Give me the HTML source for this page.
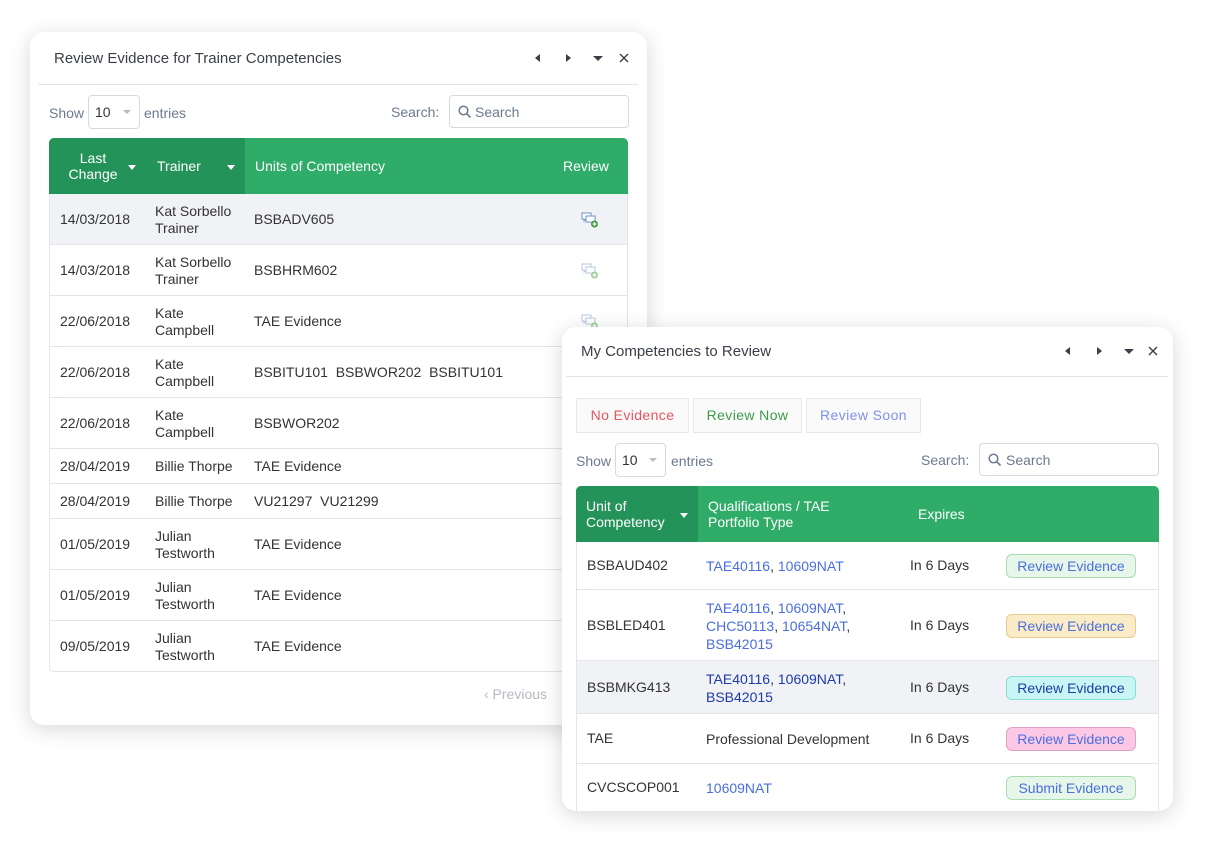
<!DOCTYPE html>
<html><head><meta charset="utf-8"><style>
*{box-sizing:border-box;margin:0;padding:0}
body{width:1216px;height:852px;background:#fff;font-family:"Liberation Sans",sans-serif;font-size:14px;color:#333;position:relative;overflow:hidden}
.p{position:absolute;background:#fff;border-radius:14px;box-shadow:0 4px 22px rgba(0,0,0,.16);overflow:hidden}
.a{position:absolute;white-space:nowrap}
.ttl{font-size:15px;color:#3a3f48}
.hr{position:absolute;height:1px;background:#e2e4e8}
.g{color:#6c7a8e}
.sel{position:absolute;border:1px solid #d6d9de;border-radius:4px;background:#fff}
.tri{display:inline-block;width:0;height:0;border-left:4px solid transparent;border-right:4px solid transparent;border-top:5px solid #fff}
.th{position:absolute;background:#2eac68;color:#fff}
.thd{position:absolute;background:#24935a}
.row{position:absolute;border-bottom:1px solid #e3e5e9;border-left:1px solid #e3e5e9;border-right:1px solid #e3e5e9}
.lk{color:#4a6ee0}
.btn{position:absolute;border-radius:6px;font-size:14px;text-align:center;line-height:22px;height:24px;width:130px;color:#4a6ee0}
.fb{position:absolute;height:35px;border:1px solid #e8e8e8;background:#fafafa;font-size:14px;line-height:33px;text-align:center;letter-spacing:.4px}
.tl{position:absolute;width:0;height:0;border-top:4px solid transparent;border-bottom:4px solid transparent;border-right:5px solid #3a3f48}
.tr{position:absolute;width:0;height:0;border-top:4px solid transparent;border-bottom:4px solid transparent;border-left:5px solid #3a3f48}
.td{position:absolute;width:0;height:0;border-left:5px solid transparent;border-right:5px solid transparent;border-top:5px solid #3a3f48}
</style></head><body>
<svg width="0" height="0" style="position:absolute"><defs><symbol id="mg" viewBox="0 0 14 14"><circle cx="5.5" cy="5.5" r="4.3" fill="none" stroke="#6c7a8e" stroke-width="1.5"/><path d="M8.7 8.7L12.5 12.5" stroke="#6c7a8e" stroke-width="1.6"/></symbol><symbol id="x" viewBox="0 0 10 10"><path d="M1 1L9 9M9 1L1 9" stroke="#3a3f48" stroke-width="1.4"/></symbol></defs></svg>

<!-- Panel 1 -->
<div class="p" style="left:30px;top:32px;width:617px;height:693px">
  <div class="a ttl" style="left:24px;top:18px">Review Evidence for Trainer Competencies</div>
  <div class="tl" style="left:505px;top:22px"></div>
  <div class="tr" style="left:536px;top:22px"></div>
  <div class="td" style="left:563px;top:24px"></div>
  <svg class="a" style="left:589px;top:21px" width="10" height="10"><use href="#x"/></svg>
  <div class="hr" style="left:8px;top:52px;width:600px"></div>
  <div class="a g" style="left:19px;top:73px">Show</div>
  <div class="sel" style="left:58px;top:63px;width:52px;height:34px"><span class="a" style="left:6px;top:8px">10</span><span class="a" style="left:34px;top:14px;border-left:4px solid transparent;border-right:4px solid transparent;border-top:4px solid #bbb"></span></div>
  <div class="a g" style="left:114px;top:73px">entries</div>
  <div class="a g" style="left:361px;top:72px">Search:</div>
  <div class="sel" style="left:419px;top:63px;width:180px;height:33px"><svg class="a" style="left:8px;top:9px" width="14" height="14"><use href="#mg"/></svg><span class="a g" style="left:25px;top:8px">Search</span></div>
  <div class="th" style="left:19px;top:106px;width:579px;height:56px;border-radius:5px 5px 0 0"></div>
  <div class="thd" style="left:19px;top:106px;width:196px;height:56px;border-radius:5px 0 0 0"></div>
  <div class="a" style="left:38px;top:118px;width:50px;color:#fff;text-align:center;line-height:16px">Last<br>Change</div>
  <div class="a" style="left:98px;top:125px"><span class="tri"></span></div>
  <div class="a" style="left:127px;top:126px;color:#fff">Trainer</div>
  <div class="a" style="left:197px;top:125px"><span class="tri"></span></div>
  <div class="a" style="left:225px;top:126px;color:#fff">Units of Competency</div>
  <div class="a" style="left:533px;top:126px;color:#fff">Review</div>
  <div id="r1"></div>
</div>

<!-- Panel 2 -->
<div class="p" style="left:562px;top:327px;width:611px;height:484px">
  <div class="a ttl" style="left:19px;top:16px">My Competencies to Review</div>
  <div class="tl" style="left:503px;top:20px"></div>
  <div class="tr" style="left:535px;top:20px"></div>
  <div class="td" style="left:562px;top:22px"></div>
  <svg class="a" style="left:586px;top:19px" width="10" height="10"><use href="#x"/></svg>
  <div class="hr" style="left:4px;top:49px;width:602px"></div>
  <div class="fb" style="left:14px;top:71px;width:113px;color:#e9545e">No Evidence</div>
  <div class="fb" style="left:131px;top:71px;width:109px;color:#3e9a4a">Review Now</div>
  <div class="fb" style="left:244px;top:71px;width:115px;color:#7f92ea">Review Soon</div>
  <div class="a g" style="left:14px;top:126px">Show</div>
  <div class="sel" style="left:53px;top:116px;width:51px;height:34px"><span class="a" style="left:6px;top:8px">10</span><span class="a" style="left:33px;top:14px;border-left:4px solid transparent;border-right:4px solid transparent;border-top:4px solid #bbb"></span></div>
  <div class="a g" style="left:109px;top:126px">entries</div>
  <div class="a g" style="left:359px;top:125px">Search:</div>
  <div class="sel" style="left:417px;top:116px;width:180px;height:33px"><svg class="a" style="left:8px;top:9px" width="14" height="14"><use href="#mg"/></svg><span class="a g" style="left:26px;top:8px">Search</span></div>
  <div class="th" style="left:14px;top:159px;width:583px;height:56px;border-radius:5px 5px 0 0"></div>
  <div class="thd" style="left:14px;top:159px;width:122px;height:56px;border-radius:5px 0 0 0"></div>
  <div class="a" style="left:24px;top:171px;color:#fff;line-height:16px">Unit of<br>Competency</div>
  <div class="a" style="left:118px;top:178px"><span class="tri"></span></div>
  <div class="a" style="left:146px;top:171px;color:#fff;line-height:16px">Qualifications / TAE<br>Portfolio Type</div>
  <div class="a" style="left:356px;top:179px;color:#fff">Expires</div>
  <div id="r2"></div>
</div>

<script>
var icon=function(o){return '<svg class="a" style="left:551px;top:'+0+'px;opacity:'+o+'" width="18" height="18" viewBox="0 0 18 18"><path d="M1 2h9v6H5l-2 2V8H1z" fill="#fff" stroke="#6f93c9"/><path d="M5 5h9v6h-2v2l-2-2H5z" fill="#fff" stroke="#6f93c9"/><circle cx="13.5" cy="13" r="3.5" fill="#3d9a3d"/><path d="M13.5 11v4M11.5 13h4" stroke="#fff" stroke-width="1.3"/></svg>';};
var r1=[["14/03/2018","Kat Sorbello<br>Trainer","BSBADV605",51,1],["14/03/2018","Kat Sorbello<br>Trainer","BSBHRM602",51,0],["22/06/2018","Kate<br>Campbell","TAE Evidence",51,0],["22/06/2018","Kate<br>Campbell","BSBITU101&nbsp; BSBWOR202&nbsp; BSBITU101",51,0],["22/06/2018","Kate<br>Campbell","BSBWOR202",51,0],["28/04/2019","Billie Thorpe","TAE Evidence",35,0],["28/04/2019","Billie Thorpe","VU21297&nbsp; VU21299",35,0],["01/05/2019","Julian<br>Testworth","TAE Evidence",51,0],["01/05/2019","Julian<br>Testworth","TAE Evidence",51,0],["09/05/2019","Julian<br>Testworth","TAE Evidence",51,0]];
var y=162,h='';
r1.forEach(function(r,i){var bg=r[4]?'#f1f2f6':'#fff';var last=i==r1.length-1?';border-radius:0 0 5px 5px':'';
h+='<div class="row" style="left:19px;top:'+y+'px;width:579px;height:'+r[3]+'px;background:'+bg+last+'"></div>';
var ty=y+r[3]/2;var two=r[1].indexOf('<br>')>0;
h+='<div class="a" style="left:30px;top:'+(ty-9)+'px">'+r[0]+'</div>';
h+='<div class="a" style="left:125px;top:'+(ty-(two?17:9))+'px;line-height:17px">'+r[1]+'</div>';
h+='<div class="a" style="left:224px;top:'+(ty-9)+'px">'+r[2]+'</div>';
if(i<3)h+=icon(i==0?1:0.5).replace('top:0px','top:'+(ty-9)+'px');
y+=r[3];});
h+='<div class="a" style="left:454px;top:654px;color:#b5bac2">&#8249; Previous</div>';
document.getElementById('r1').outerHTML=h;
var L='<span class="lk">',E='</span>';
var r2=[["BSBAUD402",L+"TAE40116"+E+", "+L+"10609NAT"+E,"In 6 Days","Review Evidence","#e6f6e8","#a9dcae",48,1,'#fff'],
["BSBLED401",L+"TAE40116"+E+", "+L+"10609NAT"+E+",<br>"+L+"CHC50113"+E+", "+L+"10654NAT"+E+",<br>"+L+"BSB42015"+E,"In 6 Days","Review Evidence","#fbecc8","#e5c98e",71,3,'#fff'],
["BSBMKG413",'<span style="color:#1c3aa8">TAE40116</span>, <span style="color:#1c3aa8">10609NAT</span>,<br><span style="color:#1c3aa8">BSB42015</span>',"In 6 Days","Review Evidence","#c9f6f4","#86dfd9",53,2,'#f1f2f6'],
["TAE","Professional Development","In 6 Days","Review Evidence","#fcc8e6","#e0a3c8",50,1,'#fff'],
["CVCSCOP001",L+"10609NAT"+E,"","Submit Evidence","#e6f6e8","#a9dcae",48,1,'#fff']];
y=215;h='';
r2.forEach(function(r){h+='<div class="row" style="left:14px;top:'+y+'px;width:583px;height:'+r[6]+'px;background:'+r[8]+'"></div>';
var ty=y+r[6]/2;
h+='<div class="a" style="left:25px;top:'+(ty-9)+'px">'+r[0]+'</div>';
h+='<div class="a" style="left:144px;top:'+(ty-r[7]*9)+'px;line-height:18px">'+r[1]+'</div>';
h+='<div class="a" style="left:348px;top:'+(ty-9)+'px">'+r[2]+'</div>';
h+='<div class="btn" style="left:444px;top:'+(ty-12)+'px;background:'+r[4]+';border:1px solid '+r[5]+(r[8]=='#f1f2f6'?';color:#1c3aa8':'')+'">'+r[3]+'</div>';
y+=r[6];});
document.getElementById('r2').outerHTML=h;
</script>
</body></html>
